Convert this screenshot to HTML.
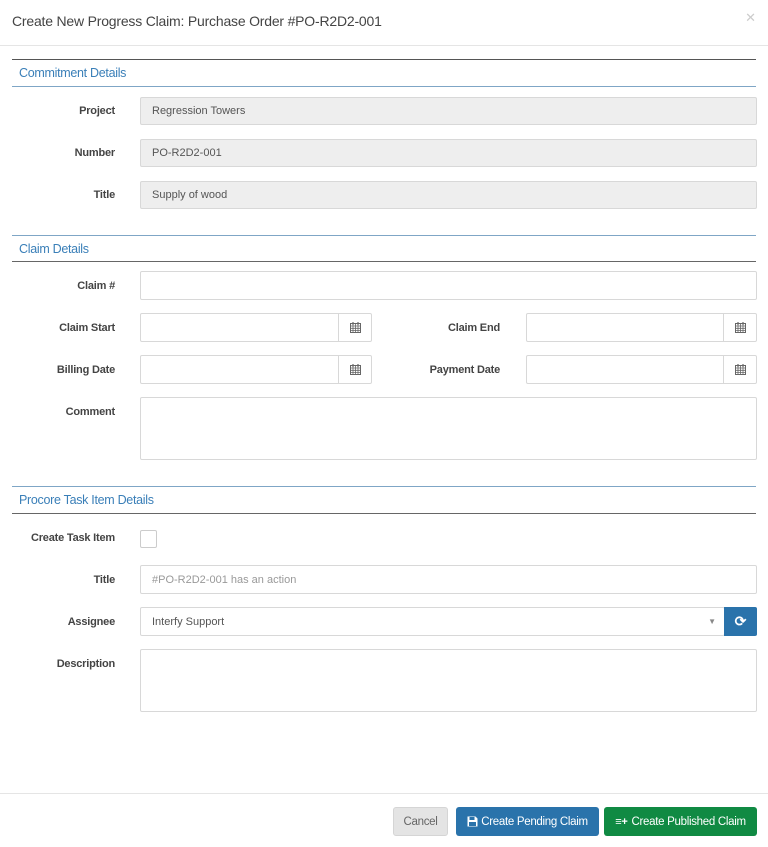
<!DOCTYPE html>
<html><head><meta charset="utf-8"><style>
*{box-sizing:border-box;margin:0;padding:0}
body{width:768px;height:847px;background:#fff;font-family:"Liberation Sans",sans-serif;position:relative;overflow:hidden;color:#333}
.a{position:absolute}
.h1{left:12px;top:13px;font-size:14px;color:#444;letter-spacing:-0.2px}
.x{right:12px;top:10px;color:#ccc;font-size:13px}
.sec{left:12px;width:744px;border-top:1px solid #7fa6c6;border-bottom:1px solid #555;height:28px;color:#3a7fb8;font-size:12.5px;padding:6px 0 0 7px;letter-spacing:-0.3px}
.sec2{border-top:1px solid #7fa6c6;border-bottom:1px solid #666}
.lbl{font-size:11px;font-weight:bold;color:#444;text-align:right;width:115px;left:0;letter-spacing:-0.2px}
.in{border:1px solid #d8d8d8;border-radius:2px;background:#fff;font-size:11px;color:#555;padding:0 11px;display:flex;align-items:center}
.ro{background:#eeeeee}
.ad{border-left:1px solid #d8d8d8;width:33px;position:absolute;right:0;top:0;bottom:0;display:flex;align-items:center;justify-content:center}
.btn{height:29px;top:807px;border-radius:3px;font-size:11.5px;color:#fff;display:flex;align-items:center;justify-content:center;letter-spacing:-0.3px}
</style></head><body>
<div class="a h1">Create New Progress Claim: Purchase Order #PO-R2D2-001</div>
<div class="a x">✕</div>
<div class="a" style="left:0;top:45px;width:768px;border-top:1px solid #e5e5e5"></div>

<div class="a sec" style="top:59px;border-top-color:#555;border-bottom-color:#7fa6c6">Commitment Details</div>
<div class="a lbl" style="top:105px">Project</div>
<div class="a in ro" style="left:140px;top:97px;width:617px;height:28px">Regression Towers</div>
<div class="a lbl" style="top:147px">Number</div>
<div class="a in ro" style="left:140px;top:139px;width:617px;height:28px">PO-R2D2-001</div>
<div class="a lbl" style="top:189px">Title</div>
<div class="a in ro" style="left:140px;top:181px;width:617px;height:28px">Supply of wood</div>

<div class="a sec sec2" style="top:235px;height:27px">Claim Details</div>
<div class="a lbl" style="top:280px">Claim #</div>
<div class="a in" style="left:140px;top:271px;width:617px;height:29px"></div>

<div class="a lbl" style="top:322px">Claim Start</div>
<div class="a in" style="left:140px;top:313px;width:232px;height:29px"><div class="ad"><svg width="11" height="11" viewBox="0 0 11 11"><rect x="0.5" y="1.5" width="10" height="9" fill="none" stroke="#666"/><path d="M0 4h11M0 6.3h11M0 8.5h11M3 2v9M5.5 2v9M8 2v9" stroke="#666" stroke-width=".8"/><path d="M3 0v3M8 0v3" stroke="#666" stroke-width="1.2"/></svg></div></div>
<div class="a lbl" style="top:322px;left:390px;width:110px">Claim End</div>
<div class="a in" style="left:526px;top:313px;width:231px;height:29px"><div class="ad"><svg width="11" height="11" viewBox="0 0 11 11"><rect x="0.5" y="1.5" width="10" height="9" fill="none" stroke="#666"/><path d="M0 4h11M0 6.3h11M0 8.5h11M3 2v9M5.5 2v9M8 2v9" stroke="#666" stroke-width=".8"/><path d="M3 0v3M8 0v3" stroke="#666" stroke-width="1.2"/></svg></div></div>

<div class="a lbl" style="top:364px">Billing Date</div>
<div class="a in" style="left:140px;top:355px;width:232px;height:29px"><div class="ad"><svg width="11" height="11" viewBox="0 0 11 11"><rect x="0.5" y="1.5" width="10" height="9" fill="none" stroke="#666"/><path d="M0 4h11M0 6.3h11M0 8.5h11M3 2v9M5.5 2v9M8 2v9" stroke="#666" stroke-width=".8"/><path d="M3 0v3M8 0v3" stroke="#666" stroke-width="1.2"/></svg></div></div>
<div class="a lbl" style="top:364px;left:390px;width:110px">Payment Date</div>
<div class="a in" style="left:526px;top:355px;width:231px;height:29px"><div class="ad"><svg width="11" height="11" viewBox="0 0 11 11"><rect x="0.5" y="1.5" width="10" height="9" fill="none" stroke="#666"/><path d="M0 4h11M0 6.3h11M0 8.5h11M3 2v9M5.5 2v9M8 2v9" stroke="#666" stroke-width=".8"/><path d="M3 0v3M8 0v3" stroke="#666" stroke-width="1.2"/></svg></div></div>

<div class="a lbl" style="top:406px">Comment</div>
<div class="a in" style="left:140px;top:397px;width:617px;height:63px"></div>

<div class="a sec sec2" style="top:486px;height:28px">Procore Task Item Details</div>
<div class="a lbl" style="top:532px">Create Task Item</div>
<div class="a" style="left:140px;top:530px;width:17px;height:18px;border:1px solid #ccc;border-radius:2px"></div>
<div class="a lbl" style="top:574px">Title</div>
<div class="a in" style="left:140px;top:565px;width:617px;height:29px;color:#999">#PO-R2D2-001 has an action</div>
<div class="a lbl" style="top:616px">Assignee</div>
<div class="a in" style="left:140px;top:607px;width:585px;height:29px">Interfy Support<span style="position:absolute;right:8px;font-size:8px;color:#888">▼</span></div>
<div class="a" style="left:724px;top:607px;width:33px;height:29px;background:#2a73ab;border-radius:0 2px 2px 0;color:#fff;font-size:14px;font-weight:bold;display:flex;align-items:center;justify-content:center">⟳</div>
<div class="a lbl" style="top:658px">Description</div>
<div class="a in" style="left:140px;top:649px;width:617px;height:63px"></div>

<div class="a" style="left:0;top:793px;width:768px;border-top:1px solid #e5e5e5"></div>
<div class="a btn" style="left:393px;width:55px;background:#e4e4e4;color:#666;border:1px solid #d5d5d5">Cancel</div>
<div class="a btn" style="left:456px;width:143px;background:#2a73ab"><svg width="11" height="11" viewBox="0 0 11 11" style="margin-right:3px"><path d="M0.5 0.5h8l2 2v8h-10z" fill="#fff"/><rect x="2.5" y="1" width="5" height="3" fill="#2a73ab"/><rect x="2" y="6" width="7" height="4" fill="#2a73ab"/></svg>Create Pending Claim</div>
<div class="a btn" style="left:604px;width:153px;background:#108a43"><b style="margin-right:4px;font-size:11px">≡+</b>Create Published Claim</div>
</body></html>
